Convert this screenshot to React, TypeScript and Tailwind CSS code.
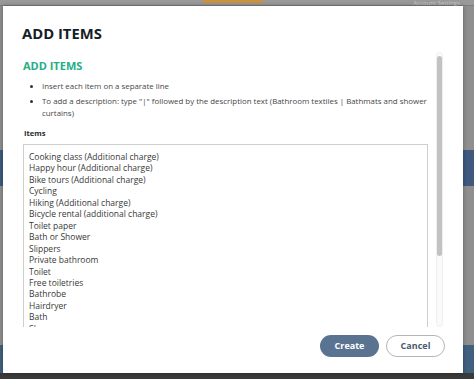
import React from 'react';

const items = [
  'Cooking class (Additional charge)',
  'Happy hour (Additional charge)',
  'Bike tours (Additional charge)',
  'Cycling',
  'Hiking (Additional charge)',
  'Bicycle rental (additional charge)',
  'Toilet paper',
  'Bath or Shower',
  'Slippers',
  'Private bathroom',
  'Toilet',
  'Free toiletries',
  'Bathrobe',
  'Hairdryer',
  'Bath',
  'Shower',
  'Towels',
  'Linens',
];

export default function App() {
  return (
    <div className="relative w-[474px] h-[379px] overflow-hidden bg-[#8f8f8f] font-['Open_Sans',sans-serif]">
      {/* page behind the dimmed overlay */}
      <div className="flex flex-col h-full">
        <div className="h-[6px] bg-[#999999] border-b border-[#7d7d7d] flex">
          <div className="ml-[203px] w-[60px] h-[3px] bg-[#c8923f]" />
          <div className="ml-auto mr-[14px] text-[6px] leading-[6px] text-[#c9c9c9]">Account Settings</div>
        </div>
        <div className="flex-1 flex flex-col">
          <div className="h-[144px]" />
          <div className="h-[36px] bg-[#3f5a7e]" />
          <div className="flex-1" />
        </div>
        <div className="h-[28px] bg-[#41607f]" />
        <div className="h-[6px] bg-[#3a3a3a]" />
      </div>

      {/* modal */}
      <div className="absolute left-[3px] top-[6px] w-[460px] h-[367px] bg-white shadow-[0_0_4px_rgba(0,0,0,0.35)] flex flex-col pl-[19px] pr-[20px] pt-[17px] pb-[16px]">
        <h1 className="text-[14.8px] leading-[20px] font-bold text-[#161c28]">ADD ITEMS</h1>

        <div className="mt-[9px] h-[275px] flex gap-[8px]">
          <div className="flex-1 overflow-hidden pt-[6px]">
            <h2 className="text-[11px] leading-[16px] font-bold text-[#22ae87] pl-[1px]">ADD ITEMS</h2>
            <ul className="mt-[7px] pl-[20px] list-disc text-[7.9px] leading-[11.5px] text-[#474747] flex flex-col gap-[3.5px] marker:text-[#333]">
              <li>Insert each item on a separate line</li>
              <li>To add a description: type "|" followed by the description text (Bathroom textiles | Bathmats and shower curtains)</li>
            </ul>
            <div className="mt-[9px] pl-[2px] text-[7.6px] leading-[11px] font-bold text-[#2b2b2b]">Items</div>
            <textarea
              readOnly
              value={items.join('\n')}
              className="mt-[5px] ml-[1px] w-[405px] h-[240px] resize-none overflow-hidden border border-[#cfcfcf] px-[5px] pt-[6px] text-[8.5px] leading-[11.45px] text-[#383838] outline-none font-['Open_Sans',sans-serif]"
            />
          </div>
          <div className="w-[7px] h-full rounded-full border border-[#efefef] bg-[#fafafa] flex justify-center pt-[3px]">
            <div className="w-[5px] h-[200px] rounded-full bg-[#c2c2c2]" />
          </div>
        </div>

        <div className="mt-auto flex justify-end gap-[7px] mr-[-2px]">
          <button className="w-[59px] h-[22px] rounded-full bg-[#5a7391] text-white text-[9px] font-bold">Create</button>
          <button className="w-[59px] h-[22px] rounded-full border border-[#b5b5b5] bg-white text-[#4a5a70] text-[9px] font-bold">Cancel</button>
        </div>
      </div>
    </div>
  );
}
